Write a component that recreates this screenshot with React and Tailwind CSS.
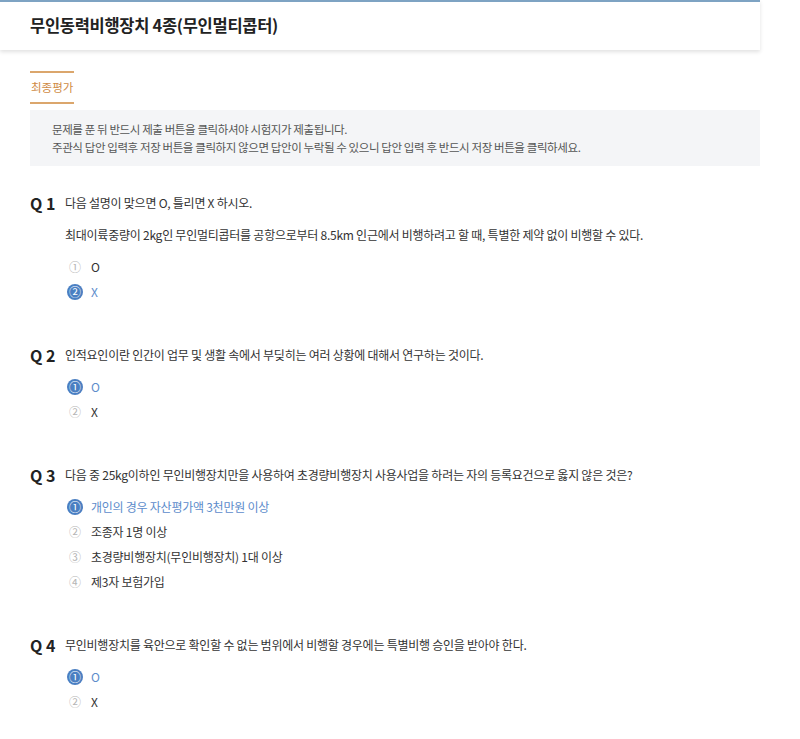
import { useState } from "react";

const questions = [
    {
        no: 1,
        text: "다음 설명이 맞으면 O, 틀리면 X 하시오.",
        sub: "최대이륙중량이 2kg인 무인멀티콥터를 공항으로부터 8.5km 인근에서 비행하려고 할 때, 특별한 제약 없이 비행할 수 있다.",
        options: ["O", "X"],
        answer: 1,
    },
    {
        no: 2,
        text: "인적요인이란 인간이 업무 및 생활 속에서 부딪히는 여러 상황에 대해서 연구하는 것이다.",
        options: ["O", "X"],
        answer: 0,
    },
    {
        no: 3,
        text: "다음 중 25kg이하인 무인비행장치만을 사용하여 초경량비행장치 사용사업을 하려는 자의 등록요건으로 옳지 않은 것은?",
        options: ["개인의 경우 자산평가액 3천만원 이상", "조종자 1명 이상", "초경량비행장치(무인비행장치) 1대 이상", "제3자 보험가입"],
        answer: 0,
    },
    {
        no: 4,
        text: "무인비행장치를 육안으로 확인할 수 없는 범위에서 비행할 경우에는 특별비행 승인을 받아야 한다.",
        options: ["O", "X"],
        answer: 0,
    },
];

const circled = ["①", "②", "③", "④", "⑤"];

function Question({ q, selected, onSelect }) {
    return (
        <div className="mt-[41px] first:mt-[27px]">
            {/* 문제 */}
            <div className="flex items-center h-[20px]">
                <span className="w-[35px] shrink-0 text-[16px] font-bold text-[#222] leading-[20px]">Q {q.no}</span>
                <span className="text-[12px] tracking-[-0.25px] text-[#333] leading-[20px]">{q.text}</span>
            </div>
            {q.sub && (
                <div className="mt-[12px] pl-[35px] h-[20px] text-[12px] tracking-[-0.25px] text-[#333] leading-[20px]">{q.sub}</div>
            )}
            {/* 보기 */}
            <div className="mt-[9px]">
                {q.options.map((opt, i) => {
                    const on = selected === i;
                    return (
                        <div
                            key={i}
                            onClick={() => onSelect(i)}
                            className="flex items-center h-[25px] pl-[37px] cursor-pointer"
                        >
                            {on ? (
                                <span className="w-[16px] h-[16px] rounded-full bg-[#4a7fc2] text-white text-[12px] leading-[16px] flex items-center justify-center">
                                    {circled[i]}
                                </span>
                            ) : (
                                <span className="w-[16px] h-[16px] text-[#b5b5b5] text-[12px] leading-[16px] flex items-center justify-center">
                                    {circled[i]}
                                </span>
                            )}
                            <span
                                className={
                                    "ml-[8px] text-[12px] tracking-[-0.25px] leading-[25px] " +
                                    (on ? "text-[#5d8ccb]" : "text-[#333]")
                                }
                            >
                                {opt}
                            </span>
                        </div>
                    );
                })}
            </div>
        </div>
    );
}

export default function App() {
    const [answers, setAnswers] = useState(questions.map((q) => q.answer));

    const select = (qi, oi) => {
        const next = [...answers];
        next[qi] = oi;
        setAnswers(next);
    };

    return (
        <div className="min-h-screen bg-white" style={{ fontFamily: '"Noto Sans CJK KR", "Noto Sans", sans-serif' }}>
            <div className="w-[760px]">
                {/* 헤더 */}
                <div className="h-[50px] border-t-2 border-[#7ea3c3] bg-white shadow-[0_2px_4px_rgba(0,0,0,0.12)] px-[30px]">
                    <h1 className="text-[16.5px] font-bold text-[#222] leading-[46px] tracking-[-0.3px]">무인동력비행장치 4종(무인멀티콥터)</h1>
                </div>

                <div className="pl-[30px] pb-[40px]">
                    {/* 탭 */}
                    <div className="mt-[21px] inline-block border-y-2 border-[#dba66c] h-[33px] px-[1px] text-[11.5px] leading-[29px] text-[#cf8b45]">
                        최종평가
                    </div>

                    {/* 안내 */}
                    <div className="mt-[6px] bg-[#f4f5f7] h-[56px] px-[22px] py-[10px] text-[11.5px] tracking-[-0.4px] leading-[18px] text-[#555]">
                        <p>문제를 푼 뒤 반드시 제출 버튼을 클릭하셔야 시험지가 제출됩니다.</p>
                        <p>주관식 답안 입력후 저장 버튼을 클릭하지 않으면 답안이 누락될 수 있으니 답안 입력 후 반드시 저장 버튼을 클릭하세요.</p>
                    </div>

                    {/* 문제 목록 */}
                    <div>
                        {questions.map((q, qi) => (
                            <Question key={q.no} q={q} selected={answers[qi]} onSelect={(oi) => select(qi, oi)} />
                        ))}
                    </div>
                </div>
            </div>
        </div>
    );
}
